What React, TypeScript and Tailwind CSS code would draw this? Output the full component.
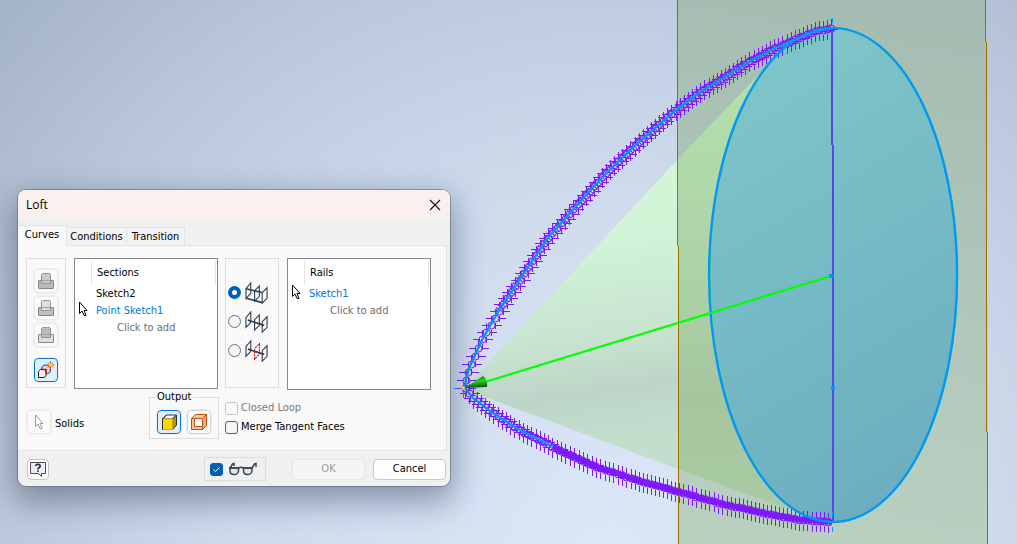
/**
 * Loft dialog over the modelling viewport
 */
import { useState } from "react";

type Point = [number, number];

const UPPER_RAIL: Point[] = [
  [465, 388], [466, 378], [469, 368], [482, 340], [499, 310], [520, 279], [547, 239], [577, 205],
  [606, 173], [640, 141], [677, 109], [700, 92], [723, 78], [750, 61], [773, 49], [800, 37],
  [816, 31], [832, 28],
];
const LOWER_RAIL: Point[] = [
  [465, 388], [473, 398], [490, 411], [518, 429], [553, 447], [597, 467], [640, 481],
  [680, 492], [723, 504], [773, 515], [802, 520], [832, 522],
];

const toPath = (pts: Point[]) => "M" + pts.map((p) => p.join(" ")).join("L");

// Walks the rail and drops a sketch point whenever x or y has moved far enough
function sketchPoints(pts: Point[], stepX: number, stepY: number): Point[] {
  const out: Point[] = [pts[0]];
  let [lx, ly] = pts[0];
  for (let i = 1; i < pts.length; i++) {
    const [x0, y0] = pts[i - 1];
    const [x1, y1] = pts[i];
    for (let t = 0; t <= 1; t += 0.01) {
      const x = x0 + (x1 - x0) * t;
      const y = y0 + (y1 - y0) * t;
      if (Math.abs(x - lx) >= stepX || Math.abs(y - ly) >= stepY) {
        out.push([Math.round(x), Math.round(y)]);
        lx = x;
        ly = y;
      }
    }
  }
  return out;
}

const MARKERS = [...sketchPoints(UPPER_RAIL, 4, 8), ...sketchPoints(LOWER_RAIL, 4, 8)];

function Viewport() {
  return (
    <svg
      className="absolute inset-0 h-full w-full"
      viewBox="0 0 1017 544"
      preserveAspectRatio="xMidYMid slice"
      aria-hidden="true"
    >
      <defs>
        <radialGradient id="sky" gradientUnits="userSpaceOnUse" cx="610" cy="560" r="830">
          <stop offset="0" stopColor="#dce7f9" />
          <stop offset="0.45" stopColor="#cfdbed" />
          <stop offset="0.75" stopColor="#bac7da" />
          <stop offset="1" stopColor="#a4b2c5" />
        </radialGradient>
        <linearGradient id="plane" x1="0.6" y1="0" x2="0.5" y2="1">
          <stop offset="0" stopColor="#a5bcb2" />
          <stop offset="1" stopColor="#b9d0c1" />
        </linearGradient>
        <linearGradient id="disc" x1="0.3" y1="0" x2="0.6" y2="1">
          <stop offset="0" stopColor="#7fc6c9" />
          <stop offset="1" stopColor="#6caebf" />
        </linearGradient>
        <linearGradient id="cone" gradientUnits="userSpaceOnUse" x1="600" y1="230" x2="630" y2="440">
          <stop offset="0" stopColor="#d2f5d8" />
          <stop offset="0.5" stopColor="#c8e4d0" />
          <stop offset="0.75" stopColor="#bdd5c7" />
          <stop offset="1" stopColor="#c2dfce" />
        </linearGradient>
        <linearGradient id="coneOnPlane" x1="0" y1="0" x2="0" y2="1">
          <stop offset="0" stopColor="#b4e0ac" />
          <stop offset="0.55" stopColor="#abcfa5" />
          <stop offset="0.75" stopColor="#a5c59f" />
          <stop offset="1" stopColor="#a9cca3" />
        </linearGradient>
        <linearGradient id="arrow" x1="0.4" y1="0" x2="0.6" y2="1">
          <stop offset="0" stopColor="#0a6a0a" />
          <stop offset="0.45" stopColor="#27d827" />
          <stop offset="1" stopColor="#065006" />
        </linearGradient>
        <g id="marker" fill="none" stroke="#7f17ff">
          <circle r="3.500" />
          <path d="M-10 0H-3M3 0H10M0 -10V-3M0 4V10" shapeRendering="crispEdges" />
        </g>
      </defs>

      <rect width="1017" height="544" fill="url(#sky)" />
      <path d="M677 0H986L988 544H679Z" fill="url(#plane)" />
      <path d="M464 389L678 159V469Z" fill="url(#cone)" />
      <path d="M678 159L763 70L833 275L790 510L678 469Z" fill="url(#coneOnPlane)" />
      <g stroke="#957000" fill="none" shapeRendering="crispEdges">
        <path d="M677.5 0V246M678.5 246V544" />
        <path d="M985.5 0V42M986.5 42V432M987.5 432V544" />
      </g>

      {/* Profile */}
      <ellipse cx="833" cy="275" rx="124" ry="247" fill="url(#disc)" />

      {/* Rails */}
      <g fill="none" stroke="#7f17ff" strokeWidth="8" strokeDasharray="1 2">
        <path d={toPath(UPPER_RAIL.slice(4))} />
        <path d={toPath(LOWER_RAIL.slice(2))} />
      </g>
      {MARKERS.map(([x, y], i) => (
        <use key={i} href="#marker" x={x + 0.5} y={y + 0.5} />
      ))}
      <path d={toPath(UPPER_RAIL)} fill="none" stroke="#0c93f5" strokeWidth="2.400" />
      <path d={toPath(LOWER_RAIL.slice(0, 5))} fill="none" stroke="#0c93f5" strokeWidth="2.400" />
      <path d={toPath(LOWER_RAIL.slice(4))} fill="none" stroke="#7f17ff" strokeWidth="5" />

      <path d="M832 28V145M833 145V522" stroke="#5546f2" strokeWidth="2" shapeRendering="crispEdges" />
      <ellipse cx="833.5" cy="275" rx="124" ry="247" fill="none" stroke="#12d838" strokeWidth="1.500" />
      <ellipse cx="833" cy="275" rx="124" ry="247" fill="none" stroke="#0095ff" strokeWidth="2.200" />
      <path d="M832.5 18V23M832.5 512V517M832.5 527V532" stroke="#0095ff" shapeRendering="crispEdges" />
      <path d="M831 386h4v4h-4z" fill="#0095ff" />

      {/* Direction arrow */}
      <path d="M831 276L485 382" stroke="#00ff00" strokeWidth="2.200" />
      <path d="M829 274h4v4h-4z" fill="#0095ff" />
      <circle cx="463" cy="388" r="2" fill="#ffe11a" />
      <path d="M454 388.5H458M463.5 379V385M463.5 392V398" stroke="#0c93f5" />
      <path d="M465 388L483 376Q488 380 487 387Z" fill="url(#arrow)" />
    </svg>
  );
}

function CursorIcon({ muted = false }: { muted?: boolean }) {
  return (
    <svg width="10" height="16" viewBox="0 0 10 16" aria-hidden="true">
      <path
        d="M1.500 1V12.500L4 10L6 14.500H8L6 9.500H9Z"
        fill="#fff"
        stroke={muted ? "#999" : "#000"}
      />
    </svg>
  );
}

function StampIcon({ body, top }: { body: string; top: string }) {
  return (
    <svg width="16" height="16" viewBox="0 0 16 16" aria-hidden="true">
      <rect x="0.500" y="7.500" width="15" height="8" rx="0.500" fill={body} stroke="#858585" />
      <path d="M3.500 10.500V1.500L4.500 .5H11.500L12.500 1.500V10.500Z" fill={top} stroke="#949494" />
      <path d="M4 7.500H12" stroke="#a3a3a3" />
    </svg>
  );
}

const ORDER_BUTTONS = [
  { label: "Move up", body: "#b9b9b9", top: "#c9c9c9" },
  { label: "Move down", body: "#bfbfbf", top: "#dedede" },
  { label: "Remove", body: "#dedede", top: "#bcbcbc" },
];

function LoftTypeIcon({ type }: { type: string }) {
  return (
    <svg width="23" height="23" viewBox="-1 -1 24 24" fill="none" stroke="#3c4450" strokeWidth="1.200" aria-hidden="true">
      <path d="M0 6L5 0V11L0 16ZM17 10L22 5V16L17 21Z" />
      {type === "area" ? (
        <path d="M9 19V8L14 3V14Z" stroke="#e00000" strokeDasharray="2 1" />
      ) : (
        <path d="M9 8L14 3V14L9 19Z" />
      )}
      {type === "rails" ? (
        <path d="M0 6L17 10M0 16L17 20.500" stroke="#2a4262" strokeWidth="1.700" />
      ) : (
        <path d="M2 8.500L19 14" stroke="#2a3f5a" strokeWidth="1.700" />
      )}
    </svg>
  );
}

const LOFT_TYPES = [
  { value: "rails", label: "Rails" },
  { value: "center", label: "Center Line" },
  { value: "area", label: "Area Loft" },
];

function PickList({ title, items, className }: { title: string; items: React.ReactNode; className: string }) {
  return (
    <section className={`w-36 border border-[#828790] bg-white ${className}`}>
      <div className="mt-0.5 mr-px ml-4 flex h-6 items-center border-x border-[#e3e3e3] pl-[5px]">
        <h2>{title}</h2>
      </div>
      <ul>{items}</ul>
    </section>
  );
}

const rowStyle = "flex h-[17px] items-center pl-[21px]";
const hintStyle = "flex h-[17px] items-center pl-[42px] text-[#6d6d6d]";
const checkStyle = "size-[13px] shrink-0 appearance-none rounded-[3px] border";
const toolButton = "flex size-6 items-center justify-center rounded-[4px] border outline-1 outline-[#eeeeee]";
const tabStyle = "h-[18px] border-t border-r border-[#e3e3e3] bg-[#f3f3f3]";

export default function App() {
  const [loftType, setLoftType] = useState("rails");
  const [output, setOutput] = useState("solid");
  const [merge, setMerge] = useState(false);
  const [preview, setPreview] = useState(true);

  return (
    <main className="relative min-h-screen w-full overflow-hidden bg-[#c6d3e6] font-['DejaVu_Sans_Condensed','DejaVu_Sans',sans-serif] text-[11px] leading-4 text-black">
      <Viewport />

      <div
        role="dialog"
        aria-label="Loft"
        className="absolute top-[190px] left-[18px] flex w-[432px] flex-col overflow-hidden rounded-lg bg-[#f0f0f0] shadow-[0_0_0_1px_rgba(90,100,115,0.55),0_12px_32px_4px_rgba(20,35,60,0.4)]"
      >
        {/* Title bar */}
        <header className="flex h-[30px] items-center justify-between bg-[#faf0f0] pr-[7px] pl-2">
          <h1 className="font-['Open_Sans',sans-serif] text-xs">Loft</h1>
          <button type="button" aria-label="Close" className="flex size-4 items-center justify-center">
            <svg width="12" height="12" viewBox="0 0 12 12" stroke="#111" strokeWidth="1.100" aria-hidden="true">
              <path d="M1 1L11 11M11 1L1 11" />
            </svg>
          </button>
        </header>

        {/* Tabs */}
        <div role="tablist" className="flex h-[25px] items-end">
          <button type="button" role="tab" aria-selected="true" className="relative z-10 -mb-px h-[21px] w-[49px] border-t border-r border-[#e3e3e3] bg-[#f9f9f9] pb-0.5">
            Curves
          </button>
          <button type="button" role="tab" aria-selected="false" className={`${tabStyle} w-[60px]`}>
            Conditions
          </button>
          <button type="button" role="tab" aria-selected="false" className={`${tabStyle} w-[58px]`}>
            Transition
          </button>
        </div>

        <div className="mr-[3px] border-y border-r border-[#e3e3e3] bg-[#f9f9f9] px-2 pt-3 pb-3">
          <div className="flex items-start">
            <div className="flex h-[130px] w-10 flex-col items-center border border-[#dcdcdc] pt-2.5">
              <div className="flex flex-col gap-[3px]">
                {ORDER_BUTTONS.map((b) => (
                  <button key={b.label} type="button" disabled aria-label={b.label} className={`${toolButton} border-[#ebebeb] bg-[#fbfbfb]`}>
                    <StampIcon body={b.body} top={b.top} />
                  </button>
                ))}
              </div>
              <button type="button" aria-label="Select sections" className={`${toolButton} mt-[11px] border-[#0078d4] bg-[#e0eef9]`}>
                <svg width="18" height="18" viewBox="0 0 18 18" className="shrink-0" aria-hidden="true">
                  <circle cx="9" cy="8.500" r="4.500" fill="#c8ddf5" stroke="#1e4ea8" strokeWidth="1.200" />
                  <path d="M1.500 10.500L3.500 8.500H9V14.500L7.500 16.500H1.500Z" fill="#eee" stroke="#222" />
                  <path d="M5 8.500H9V12.500" fill="none" stroke="#e00" strokeWidth="1.400" />
                  <path d="M13.500 0V8M9.500 4H17.500M11 1.500L16 6.500M16 1.500L11 6.500" stroke="#e0541a" />
                  <circle cx="13.500" cy="4" r="1.800" fill="#ffd21a" />
                </svg>
              </button>
            </div>

            <PickList
              title="Sections"
              className="ml-2 h-[131px]"
              items={
                <>
                  <li className={rowStyle}>Sketch2</li>
                  <li className={`${rowStyle} relative text-[#0078d7]`}>
                    <span className="absolute -top-px left-[3px]"><CursorIcon /></span>
                    Point Sketch1
                  </li>
                  <li className={hintStyle}>Click to add</li>
                </>
              }
            />

            <fieldset className="ml-[7px] flex h-[130px] w-[54px] flex-col border border-[#dcdcdc] pt-[19px] pl-0.5">
              {LOFT_TYPES.map((t) => (
                <label key={t.value} className="flex h-[29px] items-center gap-1" aria-label={t.label}>
                  <input
                    type="radio"
                    name="loft-type"
                    value={t.value}
                    checked={loftType === t.value}
                    onChange={() => setLoftType(t.value)}
                    className="size-[13px] shrink-0 appearance-none rounded-full border border-[#707070] bg-[#f5f5f5] checked:border-4 checked:border-[#005fb8] checked:bg-white"
                  />
                  <span className="pt-0.5"><LoftTypeIcon type={t.value} /></span>
                </label>
              ))}
            </fieldset>

            <PickList
              title="Rails"
              className="ml-2 h-[132px]"
              items={
                <>
                  <li className={`${rowStyle} relative text-[#0078d7]`}>
                    <span className="absolute -top-px left-[3px]"><CursorIcon /></span>
                    Sketch1
                  </li>
                  <li className={hintStyle}>Click to add</li>
                </>
              }
            />
          </div>

          <div className="flex h-12 items-start">
            <div className="flex w-[123px] items-center gap-1 pt-5 pl-px">
              <button type="button" disabled aria-label="Select solids" className={`${toolButton} border-[#ebebeb] bg-[#fbfbfb]`}>
                <CursorIcon muted />
              </button>
              <span className="pt-1">Solids</span>
            </div>

            <fieldset className="h-[49px] w-[69px] border border-[#dcdcdc] px-[7px]">
              <legend className="ml-[-2px] h-[14px] px-0.5 leading-[14px]">Output</legend>
              <div className="flex gap-1.5 pt-1.5">
                <button
                  type="button"
                  aria-label="Solid"
                  aria-pressed={output === "solid"}
                  onClick={() => setOutput("solid")}
                  className={`${toolButton} ${output === "solid" ? "border-[#0078d4] bg-[#e0eef9]" : "border-[#d0d0d0] bg-[#fdfdfd]"}`}
                >
                  <svg width="18" height="18" viewBox="0 0 18 18" className="shrink-0" strokeLinejoin="round" aria-hidden="true">
                    <path d="M2.500 6L6.500 2H16.500L12.500 6Z" fill="#fff" stroke="#23324a" />
                    <path d="M12.500 6L16.500 2V12L12.500 16.500Z" fill="#b89600" stroke="#23324a" />
                    <path d="M2.500 6H12.500V16.500H2.500Z" fill="#ffd800" stroke="#d0a800" />
                    <path d="M2.500 16.500V6L6.500 2" fill="none" stroke="#23324a" />
                  </svg>
                </button>
                <button
                  type="button"
                  aria-label="Surface"
                  aria-pressed={output === "surface"}
                  onClick={() => setOutput("surface")}
                  className={`${toolButton} ${output === "surface" ? "border-[#0078d4] bg-[#e0eef9]" : "border-[#d0d0d0] bg-[#fdfdfd]"}`}
                >
                  <svg width="18" height="18" viewBox="0 0 18 18" className="shrink-0" strokeLinejoin="round" aria-hidden="true">
                    <path d="M1.500 5.500L5.500 1.500H16.500L12.500 5.500Z" fill="#fbc49c" stroke="#c2500f" />
                    <path d="M12.500 5.500L16.500 1.500V12.500L12.500 16.500Z" fill="#f5a570" stroke="#c2500f" />
                    <path d="M1.500 5.500H12.500V16.500H1.500Z" fill="#fcc49c" stroke="#c2500f" />
                    <path d="M4.500 5.500H12.500V13.500H4.500Z" fill="#fff" stroke="#c2500f" />
                  </svg>
                </button>
              </div>
            </fieldset>

            <div className="ml-1.5 flex flex-col gap-[3px] pt-2.5">
              <label className="flex items-center gap-[3px] text-[#7a7a7a]">
                <input type="checkbox" disabled className={`${checkStyle} border-[#c3c3c3] bg-[#fbfbfb]`} />
                Closed Loop
              </label>
              <label className="flex items-center gap-[3px]">
                <input
                  type="checkbox"
                  checked={merge}
                  onChange={(e) => setMerge(e.target.checked)}
                  className={`${checkStyle} border-[#606060] bg-[#f5f5f5] checked:bg-[#005fb8]`}
                />
                Merge Tangent Faces
              </label>
            </div>
          </div>
        </div>

        {/* Footer */}
        <footer className="flex h-[35px] items-center pt-px pr-1 pl-[9px]">
          <button type="button" aria-label="Help" className="flex h-[21px] w-[22px] items-center justify-center rounded-[4px] border border-[#c4c4c4] bg-[#fdfdfd]">
            <svg width="18" height="18" viewBox="0 0 18 18" className="shrink-0" aria-hidden="true">
              <path d="M1.500 2.500H16.500V13.500H12.500V16.500L9.500 13.500H1.500Z" fill="#e9edf2" stroke="#4a4a4a" />
              <path d="M6.800 6Q6.800 4.300 9 4.300T11.200 6Q11.200 7 10 7.700T9 9.500M9 10.600V12" fill="none" stroke="#1c2533" strokeWidth="1.600" />
            </svg>
          </button>

          <label aria-label="Preview" className="relative ml-[155px] flex h-6 w-[62px] items-center gap-[5px] border border-[#dcdcdc] pl-[5px]">
            <input
              type="checkbox"
              checked={preview}
              onChange={(e) => setPreview(e.target.checked)}
              className={`${checkStyle} border-[#606060] checked:border-[#005fb8] checked:bg-[#005fb8]`}
            />
            {preview && (
              <svg width="13" height="13" viewBox="0 0 13 13" className="pointer-events-none absolute left-[5px]" fill="none" stroke="#fff" aria-hidden="true">
                <path d="M3.500 6.500L5.500 8.500L9.500 4.500" />
              </svg>
            )}
            <svg width="30" height="14" viewBox="0 0 30 14" fill="none" stroke="#3a444e" strokeWidth="1.500" aria-hidden="true">
              <path d="M2 6V9Q2 12.500 6 12.500T10.500 9V6ZM15.500 6V9Q15.500 12.500 19.500 12.500T24 9V6Z" fill="#dde9ea" />
              <path d="M1 6H11Q13 4.500 15 6H24.500M2 6L4.500 2L6 1.500V4M24 6L26.500 2L28 1.500V5" />
            </svg>
          </label>

          <button type="button" disabled className="ml-[26px] h-[21px] w-[73px] rounded-[4px] border border-[#e6e6e6] bg-[#f5f5f5] text-[#9a9a9a]">
            OK
          </button>
          <button type="button" className="ml-2 h-[21px] w-[73px] rounded-[4px] border border-[#c8c8c8] bg-[#fdfdfd]">
            Cancel
          </button>
        </footer>
      </div>
    </main>
  );
}
